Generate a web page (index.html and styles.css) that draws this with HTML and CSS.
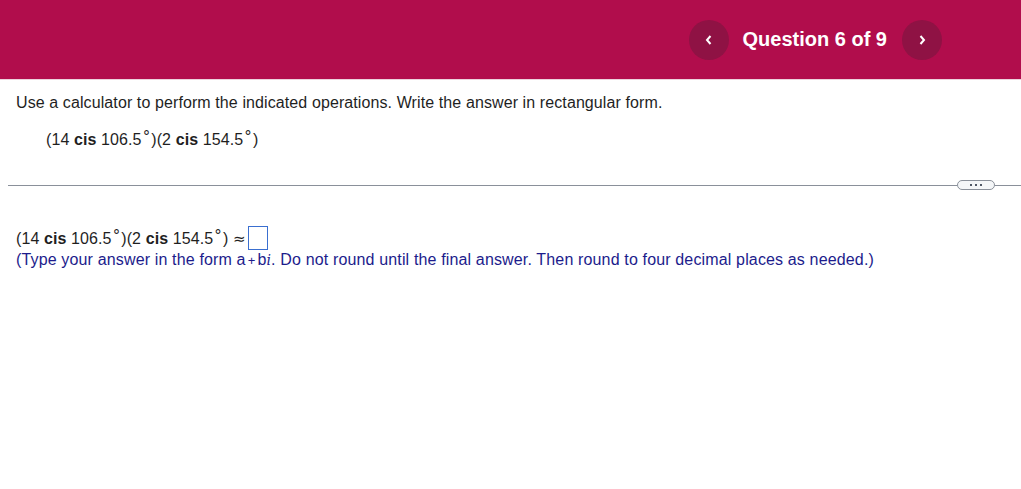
FILE: index.html
```html
<!DOCTYPE html>
<html>
<head>
<meta charset="utf-8">
<link rel="stylesheet" href="styles.css">
</head>
<body>
<header class="topbar">
  <div class="nav">
    <button class="navbtn" aria-label="Previous question">
      <svg width="10" height="12" viewBox="0 0 10 12"><path d="M6.5 2 L3 6 L6.5 10" fill="none" stroke="#fff" stroke-width="2"/></svg>
    </button>
    <span class="qtitle">Question 6 of 9</span>
    <button class="navbtn" aria-label="Next question">
      <svg width="10" height="12" viewBox="0 0 10 12"><path d="M3.5 2 L7 6 L3.5 10" fill="none" stroke="#fff" stroke-width="2"/></svg>
    </button>
  </div>
</header>
<div class="underline"></div>
<main class="content">
  <p class="prompt">Use a calculator to perform the indicated operations. Write the answer in rectangular form.</p>
  <p class="expr">(14 <b>cis</b> 106.5<span class="deg">°</span>)(2 <b>cis</b> 154.5<span class="deg">°</span>)</p>
  <div class="divider">
    <span class="rule"></span>
    <span class="more"><i></i><i></i><i></i></span>
    <span class="rule short"></span>
  </div>
  <p class="answer">(14 <b>cis</b> 106.5<span class="deg">°</span>)(2 <b>cis</b> 154.5<span class="deg">°</span>) <span class="approx">≈</span><span class="box"></span></p>
  <p class="hint">(Type your answer in the form a<span class="plus">+</span>b<i class="ivar">i</i>. Do not round until the final answer. Then round to four decimal places as needed.)</p>
</main>
</body>
</html>
```
FILE: styles.css
```css
html, body {
  margin: 0;
  padding: 0;
  background: #fff;
  font-family: "Liberation Sans", Arial, sans-serif;
}
.topbar {
  height: 79px;
  background: #b10d4c;
  display: flex;
  justify-content: flex-end;
  align-items: center;
  padding-right: 79px;
}
.underline {
  height: 1px;
  background: #ecd3dc;
}
.nav {
  display: flex;
  align-items: center;
}
.navbtn {
  width: 40px;
  height: 40px;
  border-radius: 50%;
  border: none;
  background: #8f1244;
  display: flex;
  align-items: center;
  justify-content: center;
  padding: 0;
}
.qtitle {
  color: #fff;
  font-weight: bold;
  font-size: 20px;
  margin: 0 15px 0 14px;
}
.content {
  color: #1f1f1f;
  font-size: 16px;
  letter-spacing: 0.1px;
}
.prompt {
  margin: 14px 0 0 16px;
  line-height: 18px;
}
.expr {
  margin: 19px 0 0 46px;
  line-height: 18px;
}
.deg {
  display: inline-block;
  position: relative;
  top: -3px;
  margin: 0 1px 0 1px;
  line-height: 0;
  font-family: "DejaVu Sans", sans-serif;
  font-size: 15px;
}
.divider {
  display: flex;
  align-items: center;
  margin: 31px 0 0 8px;
}
.rule {
  flex: 1;
  height: 1px;
  background: #8a909a;
}
.rule.short {
  flex: 0 0 26px;
}
.more {
  width: 36px;
  height: 8px;
  border: 1px solid #8a909a;
  border-radius: 5px;
  display: flex;
  align-items: center;
  justify-content: center;
  gap: 3px;
  background: #f4f6f8;
}
.more i {
  width: 2px;
  height: 2px;
  background: #505866;
  display: block;
}
.answer {
  margin: 36px 0 0 16px;
  line-height: 24px;
  height: 24px;
}
.approx {
  font-family: "DejaVu Sans", sans-serif;
  font-size: 15px;
  margin: 0 2px 0 0;
}
.box {
  display: inline-block;
  width: 18px;
  height: 22px;
  border: 1px solid #3a6fd0;
  vertical-align: -6px;
}
.hint {
  margin: 1px 0 0 16px;
  color: #1c1c8c;
  line-height: 18px;
  letter-spacing: 0.15px;
}
.plus {
  font-size: 13px;
  margin: 0 2px;
}
.ivar {
  font-family: "DejaVu Serif", serif;
  font-style: italic;
  font-size: 14px;
}
```
